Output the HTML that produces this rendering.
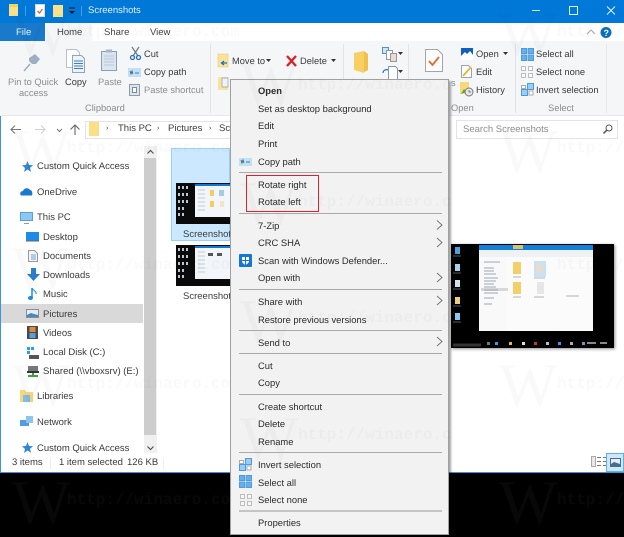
<!DOCTYPE html>
<html><head><meta charset="utf-8"><style>
html,body{margin:0;padding:0;background:#000}
#r{position:relative;width:624px;height:537px;overflow:hidden;background:#000;font-family:"Liberation Sans",sans-serif;font-size:10px;color:#333;filter:blur(.35px);text-rendering:geometricPrecision}
#r div,#r span.t{position:absolute;white-space:nowrap}
.t{line-height:12px;margin-top:1px}
.g{color:#8c8c8c}
.n{color:#3a3a3a}
.m{color:#2b2b2b;left:258px;font-size:9.400px}
.sep{left:239px;width:203px;height:1px;background:#a9a9a9}
svg{position:absolute;overflow:visible}
#r .wm{color:#000;opacity:.018;font-family:"Liberation Mono",monospace;font-weight:bold;font-size:16px;line-height:24px}
#r .W{color:#000;opacity:.02;font-family:"Liberation Serif",serif;font-size:62px;line-height:62px}
#r .k{color:#fff;opacity:.03}
.ri{font-size:9.300px}
.na{font-size:9.500px}
</style></head><body><div id="r">
<!-- window -->
<div style="left:0;top:0;width:624px;height:473px;background:#fff"></div>
<div style="left:0;top:0;width:624px;height:23px;background:#0078d7"></div>
<div style="left:0;top:23px;width:1px;height:449px;background:#3a95dc"></div>
<div style="left:0;top:472px;width:624px;height:1px;background:#3a95dc"></div>
<div style="left:0;top:41px;width:624px;height:74px;background:#f5f6f7"></div>
<div style="left:0;top:115px;width:624px;height:1px;background:#e8e8e8"></div>
<div style="left:0;top:23px;width:45px;height:18px;background:#1979ca"></div>
<div style="left:46px;top:23px;width:46px;height:18px;background:#f5f6f7"></div>
<!-- titlebar -->
<svg style="left:9px;top:3px" width="10" height="14"><path d="M0 1h9v12H0z" fill="#fbe08a"/><path d="M0 1h9v3H0z" fill="#f5cf5f"/></svg>
<div style="left:25px;top:6px;width:1px;height:10px;background:#4a9fe0"></div>
<svg style="left:35px;top:4px" width="11" height="14"><path d="M.5.500h9v12h-9z" fill="#fff" stroke="#d9d9d9"/><path d="M2.500 7l2 2 3-4" fill="none" stroke="#e2603a" stroke-width="1.300"/></svg>
<svg style="left:53px;top:4px" width="10" height="14"><path d="M0 1h10v12H0z" fill="#fbe08a"/></svg>
<svg style="left:69px;top:8px" width="7" height="7"><path d="M0 0h6" stroke="#111"/><path d="M0 3h6L3 6z" fill="#111"/></svg>
<div style="left:81px;top:6px;width:1px;height:10px;background:#4a9fe0"></div>
<span class="t" style="left:88px;top:4px;color:#e4f1fb;font-size:9.500px">Screenshots</span>
<svg style="left:532px;top:5px" width="80" height="12"><path d="M0 5.500h8" stroke="#cfe6f8"/><path d="M37.500 1.500h8v8h-8z" fill="none" stroke="#e6f2fb"/><path d="M75 1.500l8 8M83 1.500l-8 8" stroke="#e6f2fb"/></svg>
<!-- tabs -->
<span class="t" style="left:16px;top:26px;color:#e8f3fb;font-size:9.500px">File</span>
<span class="t" style="left:57px;top:26px;color:#444;font-size:9.500px">Home</span>
<span class="t" style="left:104px;top:26px;color:#444;font-size:9.500px">Share</span>
<span class="t" style="left:150px;top:26px;color:#444;font-size:9.500px">View</span>
<svg style="left:599px;top:27px" width="25" height="14"><path d="M-12 7l4-4 4 4" fill="none" stroke="#aaa"/><circle cx="7" cy="5.500" r="5.500" fill="#0a6fc2"/><text x="4.500" y="9" font-size="9" font-weight="bold" fill="#fff" font-family="Liberation Sans">?</text></svg>
<!-- ribbon: clipboard -->
<svg style="left:23px;top:53px" width="18" height="20"><path d="M6 5l6-4 5 5-4 5-4 0-3-3z" fill="#9db0c2"/><path d="M7 11l-6 7" stroke="#9db0c2" stroke-width="1.500"/></svg>
<span class="t g ri" style="left:8px;top:75px">Pin to Quick</span>
<span class="t g ri" style="left:19px;top:86px">access</span>
<svg style="left:66px;top:49px" width="20" height="25"><path d="M.5.500h10l3 3v15H.5z" fill="#fff" stroke="#b7c1cc"/><path d="M6.500 6.500h9l3 3v14h-12z" fill="#eaf2fb" stroke="#8fa5bb"/><path d="M8 12h9M8 14.500h9M8 17h9M8 19.500h9" stroke="#3f7cc6"/></svg>
<span class="t n ri" style="left:65px;top:75px">Copy</span>
<svg style="left:101px;top:49px" width="17" height="24"><path d="M.5 2.500h15v19H.5z" fill="#dbe5f0" stroke="#8b9db0"/><path d="M5 .5h6v3H5z" fill="#aab6c3"/><path d="M3 7h10M3 10h10M3 13h10M3 16h10" stroke="#b7c6d6"/></svg>
<span class="t g ri" style="left:98px;top:75px">Paste</span>
<svg style="left:130px;top:47px" width="11" height="14"><path d="M2 0l6 9M9 0L3 9" stroke="#6a7785" stroke-width="1.200"/><circle cx="2.500" cy="10.500" r="2" fill="none" stroke="#1f6fc0" stroke-width="1.300"/><circle cx="8.500" cy="10.500" r="2" fill="none" stroke="#1f6fc0" stroke-width="1.300"/></svg>
<span class="t n ri" style="left:144px;top:47px">Cut</span>
<svg style="left:128px;top:68px" width="13" height="9"><path d="M0 0h13v9H0z" fill="#bfe0f7"/><path d="M2 3l1 3 1-3 1 3M7 5h4" stroke="#44535f" fill="none" stroke-width=".8"/></svg>
<span class="t n ri" style="left:144px;top:65px">Copy path</span>
<svg style="left:129px;top:83px" width="11" height="13"><path d="M.5 1.500h10v11H.5z" fill="#dce5ee" stroke="#8e9caa"/><path d="M3.500 4.500h4v5h-4z" fill="#fff" stroke="#7e8c9a"/></svg>
<span class="t g ri" style="left:144px;top:83px">Paste shortcut</span>
<span class="t g ri" style="left:85px;top:101px">Clipboard</span>
<div style="left:210px;top:44px;width:1px;height:69px;background:#e2e3e4"></div>
<!-- organize -->
<svg style="left:218px;top:54px" width="11" height="14"><path d="M0 0h10v13H0z" fill="#fbe29a" stroke="#e9c66a" stroke-width=".6"/><path d="M9 9H4M6 7L3.500 9 6 11" fill="none" stroke="#1d72c8" stroke-width="1.300"/></svg>
<span class="t n ri" style="left:232px;top:54px">Move to</span>
<svg style="left:266px;top:59px" width="6" height="4"><path d="M0 0h5L2.500 3z" fill="#333"/></svg>
<svg style="left:286px;top:55px" width="11" height="12"><path d="M1 1l9 10M10 1L1 11" stroke="#d8202a" stroke-width="2.300"/></svg>
<span class="t n ri" style="left:300px;top:54px">Delete</span>
<svg style="left:331px;top:59px" width="6" height="4"><path d="M0 0h5L2.500 3z" fill="#333"/></svg>
<svg style="left:218px;top:77px" width="12" height="14"><path d="M0 0h10v13H0z" fill="#fbe29a"/><path d="M4 1h6v9H4z" fill="#eef3f8" stroke="#8fa0b1" stroke-width=".7"/></svg>
<div style="left:343px;top:44px;width:1px;height:69px;background:#e2e3e4"></div>
<!-- new -->
<svg style="left:354px;top:51px" width="15" height="22"><path d="M0 2l10-2v3h4v16l-4 2v1L0 19z" fill="#f7cf62"/><path d="M10 0v21l4-2V3" fill="#efc04a"/></svg>
<svg style="left:382px;top:47px" width="18" height="16"><path d="M.5.500h6v6h-6z" fill="#cfe4f7" stroke="#4f92d2"/><path d="M4.500 3.500h6v9h-6z" fill="#fff" stroke="#8b99a8"/><path d="M8.500 6.500h6v8h-6z" fill="#f3d9cc" stroke="#8b99a8"/></svg>
<svg style="left:398px;top:52px" width="6" height="4"><path d="M0 0h5L2.500 3z" fill="#333"/></svg>
<svg style="left:382px;top:65px" width="18" height="15"><path d="M1 8c0-3 3-4 6-3" fill="none" stroke="#1d72c8" stroke-width="1.200"/><path d="M6.500 1.500h7l2 2v11h-9z" fill="#fff" stroke="#8b99a8"/></svg>
<svg style="left:398px;top:70px" width="6" height="4"><path d="M0 0h5L2.500 3z" fill="#333"/></svg>
<div style="left:408px;top:44px;width:1px;height:69px;background:#e2e3e4"></div>
<!-- open -->
<svg style="left:425px;top:49px" width="18" height="24"><path d="M.5.500h12l5 5v17H.5z" fill="#fdfdfd" stroke="#a5a5a5"/><path d="M4 12l3.500 4L14 8" fill="none" stroke="#e66a2c" stroke-width="1.800"/></svg>
<span class="t g ri" style="left:451px;top:76px">s</span>
<svg style="left:461px;top:48px" width="12" height="12"><path d="M0 0h12v12H0z" fill="#fff"/><path d="M0 0h12v7L9 3 6 6 4 4 0 8z" fill="#0f5fbf"/></svg>
<span class="t n ri" style="left:476px;top:47px">Open</span>
<svg style="left:503px;top:52px" width="6" height="4"><path d="M0 0h5L2.500 3z" fill="#333"/></svg>
<svg style="left:461px;top:65px" width="12" height="14"><path d="M.5.500h7l3 3v9H.5z" fill="#fff" stroke="#98a3ad"/><path d="M2 11L10 2" stroke="#ecb52f" stroke-width="1.800"/></svg>
<span class="t n ri" style="left:476px;top:65px">Edit</span>
<svg style="left:460px;top:82px" width="14" height="15"><path d="M0 0h9v12H0z" fill="#f8d975"/><path d="M1 12l3-5 2 3z" fill="#3bb04a"/><circle cx="9" cy="10" r="4" fill="#e7e7e7" stroke="#777"/><path d="M9 8v2h2" fill="none" stroke="#555" stroke-width=".7"/></svg>
<span class="t n ri" style="left:476px;top:83px">History</span>
<span class="t g ri" style="left:451px;top:101px">Open</span>
<div style="left:515px;top:44px;width:1px;height:69px;background:#e2e3e4"></div>
<!-- select -->
<svg style="left:521px;top:48px" width="13" height="13"><path d="M0 0h13v13H0z" fill="#fff"/><path d="M.5.500h5v5h-5zM7 .5h5.500v5H7zM.5 7h5v5.500h-5zM7 7h5.500v5.500H7z" fill="#69aee9" stroke="#4b9be0"/></svg>
<span class="t n ri" style="left:536px;top:47px">Select all</span>
<svg style="left:521px;top:66px" width="13" height="13"><path d="M.5.500h4v4h-4zM7.500.5h4v4h-4zM.5 7.500h4v4h-4zM7.500 7.500h4v4h-4z" fill="#fff" stroke="#bdbdbd"/></svg>
<span class="t n ri" style="left:536px;top:65px">Select none</span>
<svg style="left:521px;top:83px" width="13" height="13"><path d="M6.500.5h6v6h-6zM.5 6.500h6v6h-6z" fill="#9ccbf3" stroke="#4b9be0"/><path d="M.5 2.500h4v3h-4zM8 8h4v4H8z" fill="#fff" stroke="#aaa"/></svg>
<span class="t n ri" style="left:536px;top:83px">Invert selection</span>
<span class="t g ri" style="left:548px;top:101px">Select</span>
<div style="left:606px;top:44px;width:1px;height:69px;background:#e8e9ea"></div>
<!-- address -->
<svg style="left:11px;top:124px" width="70" height="12"><path d="M0 5.500h10M4 1.500L0 5.500l4 4" fill="none" stroke="#777" stroke-width="1.100"/><path d="M24 5.500h10M30 1.500l4 4-4 4" fill="none" stroke="#d0d0d0" stroke-width="1.100"/><path d="M46 5l2.500 2.500L51 5" fill="none" stroke="#777"/><path d="M64 1v10M59.500 5.500L64 1l4.500 4.500" fill="none" stroke="#666" stroke-width="1.100"/></svg>
<div style="left:85px;top:121px;width:145px;height:16px;border:1px solid #e3e3e3;background:#fff"></div>
<svg style="left:89px;top:121px" width="12" height="16"><path d="M0 1h10v14H0z" fill="#fbdf86"/></svg>
<span class="t n" style="left:106px;top:122px;font-size:7px">›</span>
<span class="t n na" style="left:118px;top:122px">This PC</span>
<span class="t n" style="left:157px;top:122px;font-size:7px">›</span>
<span class="t n na" style="left:168px;top:122px">Pictures</span>
<span class="t n" style="left:209px;top:122px;font-size:7px">›</span>
<span class="t n na" style="left:219px;top:122px">Sc</span>
<div style="left:456px;top:120px;width:160px;height:17px;border:1px solid #e3e3e3;background:#fff"></div>
<span class="t g na" style="left:463px;top:123px">Search Screenshots</span>
<svg style="left:603px;top:124px" width="10" height="10"><circle cx="6" cy="4" r="3" fill="none" stroke="#555"/><path d="M3.800 6.200L.5 9.500" stroke="#555" stroke-width="1.500"/></svg>
<!-- nav -->
<div style="left:144px;top:146px;width:13px;height:307px;background:#f0f0f0"></div>
<div style="left:144px;top:158px;width:12px;height:277px;background:#cdcdcd"></div>
<svg style="left:147px;top:149px" width="8" height="6"><path d="M.5 4.500L3.500 1.500l3 3" fill="none" stroke="#555" stroke-width="1.200"/></svg>
<svg style="left:147px;top:445px" width="8" height="6"><path d="M.5 1.500L3.500 4.500l3-3" fill="none" stroke="#555" stroke-width="1.200"/></svg>
<div style="left:1px;top:304px;width:142px;height:19px;background:#d9d9d9"></div>
<svg style="left:22px;top:161px" width="11" height="11"><path d="M5.500 0l1.500 4 4 .3-3 2.500 1 4L5.500 8.500 2 11l1-4L0 4.300 4 4z" fill="#2f86d6"/></svg>
<span class="t n na" style="left:37px;top:160px">Custom Quick Access</span>
<svg style="left:20px;top:187px" width="13" height="9"><path d="M1 8.500C-1 6 1 4 3 4c1-3 5-4 7-1 2 0 3 3 2 5.500z" fill="#1a78d2"/></svg>
<span class="t n na" style="left:37px;top:186px">OneDrive</span>
<svg style="left:20px;top:212px" width="13" height="13"><path d="M0 0h13v9H0z" fill="#8bc8f3"/><path d="M.5.500h12v8H.5z" fill="none" stroke="#5a9fd6"/><path d="M4 11h5v1H4z" fill="#999"/></svg>
<span class="t n na" style="left:37px;top:211px">This PC</span>
<svg style="left:26px;top:232px" width="13" height="10"><path d="M0 0h13v9H0z" fill="#1b8ae8"/><path d="M0 9h13" stroke="#666"/></svg>
<span class="t n na" style="left:43px;top:231px">Desktop</span>
<svg style="left:28px;top:250px" width="10" height="12"><path d="M.5.500h6l3 3v8H.5z" fill="#f4f4f4" stroke="#999"/><path d="M3 5h5M3 7h5M3 9h5" stroke="#6aa4d8"/></svg>
<span class="t n na" style="left:43px;top:250px">Documents</span>
<svg style="left:27px;top:268px" width="13" height="14"><path d="M4 0h5v6h4L6.500 13 0 6h4z" fill="#2c7fd0"/></svg>
<span class="t n na" style="left:43px;top:269px">Downloads</span>
<svg style="left:28px;top:287px" width="10" height="14"><path d="M4 1v10" stroke="#1a8ae4" stroke-width="1.500"/><ellipse cx="2.500" cy="11" rx="2.500" ry="2" fill="#1a8ae4"/><path d="M4 1c1 3 5 3 4 6" fill="none" stroke="#1a8ae4"/></svg>
<span class="t n na" style="left:43px;top:288px">Music</span>
<svg style="left:26px;top:309px" width="13" height="9"><path d="M.5.500h12v8H.5z" fill="#dfeefa" stroke="#8d8d8d"/><path d="M1 6l4-2 3 1 4 1v2H1z" fill="#4b87bd"/></svg>
<span class="t n na" style="left:43px;top:308px">Pictures</span>
<svg style="left:27px;top:326px" width="11" height="13"><path d="M0 0h11v13H0z" fill="#4b4b4b"/><path d="M2.500 1h6v5h-6z" fill="#e08a3a"/><path d="M2.500 7h6v5h-6z" fill="#5a9fd6"/></svg>
<span class="t n na" style="left:43px;top:327px">Videos</span>
<svg style="left:26px;top:346px" width="13" height="13"><path d="M1 1h3v3H1zM5 1h3v3H5zM1 5h3v3H1z" fill="#28a0ee"/><path d="M3 9h10v4H3z" fill="#555"/></svg>
<span class="t n na" style="left:43px;top:346px">Local Disk (C:)</span>
<svg style="left:27px;top:366px" width="12" height="12"><path d="M1 0h10v5H1z" fill="#777"/><path d="M0 5h12v2H0z" fill="#333"/><path d="M5 7h2v2h4v2H1V9h4z" fill="#37a537"/></svg>
<span class="t n na" style="left:43px;top:365px">Shared (\\vboxsrv) (E:)</span>
<svg style="left:20px;top:390px" width="13" height="12"><path d="M0 0h5l1 2h7v10H0z" fill="#f8d775"/><path d="M3 5h7v7H3z" fill="#7fbdec"/></svg>
<span class="t n na" style="left:37px;top:390px">Libraries</span>
<svg style="left:20px;top:415px" width="13" height="13"><path d="M0 5h9v6H0z" fill="#4f9de0"/><path d="M6 1h7v7H6z" fill="#8cc3ef"/></svg>
<span class="t n na" style="left:37px;top:416px">Network</span>
<svg style="left:22px;top:442px" width="11" height="11"><path d="M5.500 0l1.500 4 4 .3-3 2.500 1 4L5.500 8.500 2 11l1-4L0 4.300 4 4z" fill="#2f86d6"/></svg>
<span class="t n na" style="left:37px;top:442px">Custom Quick Access</span>
<!-- status -->
<span class="t n na" style="left:12px;top:456px">3 items</span>
<div style="left:50px;top:458px;width:1px;height:11px;background:#eee"></div>
<span class="t n na" style="left:59px;top:456px">1 item selected</span>
<span class="t n na" style="left:127px;top:456px">126 KB</span>
<div style="left:163px;top:458px;width:1px;height:11px;background:#eee"></div>
<svg style="left:591px;top:453px" width="33" height="19"><path d="M.5 3.500h4v10h-4z" fill="#e8e8e8" stroke="#aaa"/><path d="M6 4.500h4M12 4.500h4M6 8.500h4M12 8.500h4M6 12.500h4M12 12.500h4" stroke="#777"/></svg>
<div style="left:606px;top:453px;width:16px;height:17px;background:#cce8ff;border:1px solid #5cb2ec"></div>
<svg style="left:610px;top:458px" width="11" height="9"><path d="M.5.500h10v8H.5z" fill="#dfeefa" stroke="#666"/><path d="M1 6l3-2 3 1 3 1v2H1z" fill="#3a6f9f"/></svg>
<!-- files -->
<div style="left:171px;top:148px;width:59px;height:93px;background:#cce8ff;border:1px solid #99d1ff;box-sizing:border-box"></div>
<div style="left:176px;top:183px;width:54px;height:41px;background:#0a0a0a"></div>
<div style="left:195px;top:184px;width:35px;height:33px;background:#f2f6fa"></div>
<div style="left:195px;top:184px;width:35px;height:2px;background:#0f7ad6"></div>
<svg style="left:178px;top:185px" width="52" height="34"><path d="M0 1h2v3H0zM4 1h2v3H4zM8 1h2v3H8zM0 8h2v3H0zM4 8h2v3H4zM8 8h2v3H8zM0 15h2v3H0zM4 15h2v3H4zM8 15h2v3H8zM0 22h2v3H0zM4 22h2v3H4zM0 28h2v3H0zM4 28h2v3H4z" fill="#b9c6d2"/><path d="M32 5h4v6h-4zM32 16h4v6h-4z" fill="#f5cd5e"/><path d="M41 5h5v6h-5z" fill="#a8c9e4"/><path d="M42 16h4v6h-4z" fill="#efe7c7"/><path d="M20 5h7M20 9h7M20 13h7M20 17h7M20 21h7M20 25h7" stroke="#c2cad2"/></svg>
<span class="t n na" style="left:183px;top:228px">Screenshot</span>
<div style="left:176px;top:245px;width:54px;height:41px;background:#0a0a0a"></div>
<div style="left:195px;top:246px;width:35px;height:33px;background:#f2f6fa"></div>
<div style="left:195px;top:246px;width:35px;height:2px;background:#0f7ad6"></div>
<svg style="left:178px;top:247px" width="52" height="34"><path d="M0 1h2v3H0zM4 1h2v3H4zM8 1h2v3H8zM0 8h2v3H0zM4 8h2v3H4zM8 8h2v3H8zM0 15h2v3H0zM4 15h2v3H4zM8 15h2v3H8zM0 22h2v3H0zM4 22h2v3H4zM0 28h2v3H0zM4 28h2v3H4z" fill="#b9c6d2"/><path d="M30 6h5v3h-5zM39 6h5v3h-5z" fill="#555"/><path d="M20 5h7M20 9h7M20 13h7M20 17h7M20 21h7M20 25h7" stroke="#c2cad2"/></svg>
<span class="t n na" style="left:183px;top:290px">Screenshot</span>
<!-- preview -->
<div style="left:451px;top:244px;width:163px;height:104px;background:#000;box-shadow:1px 1px 3px rgba(0,0,0,.45)"></div>
<div style="left:479px;top:245px;width:114px;height:86px;background:#fbfbfb"></div>
<div style="left:479px;top:245px;width:114px;height:5px;background:#1380d8"></div>
<div style="left:513px;top:245px;width:10px;height:4px;background:#d9c267"></div>
<div style="left:479px;top:250px;width:114px;height:7px;background:#f0f1f3"></div>
<div style="left:479px;top:257px;width:28px;height:74px;background:#f9f9f9"></div>
<div style="left:481px;top:288px;width:27px;height:3px;background:#d8d8d8"></div>
<svg style="left:481px;top:261px" width="110" height="62"><path d="M3 1h16M3 7h10M3 10h10M3 13h12M3 17h14M3 20h12M3 23h10M3 26h12M3 29h14M3 32h14M3 37h10M3 43h8" stroke="#9aa6b2"/><path d="M32 1h8v12h-8zM32 21h8v12h-8z" fill="#f3cf6a"/><path d="M53 0h12v16H53z" fill="#c7e2f6"/><path d="M55 3h7v9h-7z" fill="#e8dcd0"/><path d="M56 21h7v12h-7z" fill="#e6e6e6"/><path d="M32 16h8M53 17h11M32 36h8M53 36h10M85 35h13" stroke="#b3b3b3"/></svg>
<svg style="left:453px;top:246px" width="160" height="100"><path d="M2 1h5v7H2z" fill="#4d9fe0"/><path d="M2 18h5v7H2z" fill="#a7d0ee"/><path d="M2 34h5v7H2z" fill="#cfe2f0"/><path d="M2 51h5v7H2z" fill="#eecf73"/><path d="M2 67h5v7H2z" fill="#8cc6f0"/><path d="M0 10h8M0 27h8M0 43h8M0 60h8M0 76h8" stroke="#556"/><path d="M0 99h28" stroke="#333" stroke-width="3"/></svg>
<svg style="left:487px;top:342px" width="125" height="4"><path d="M0 0h3v3H0z" fill="#777"/><path d="M8 0h3v3H8z" fill="#3a9be0"/><path d="M22 0h3v3h-3z" fill="#d9b95a"/><path d="M35 0h3v3h-3z" fill="#ddd"/><path d="M47 0h3v3h-3z" fill="#c33"/><path d="M59 0h3v3h-3z" fill="#9cc"/><path d="M71 0h3v3h-3z" fill="#39e"/><path d="M83 0h3v3h-3z" fill="#aab"/><path d="M95 0h3v3h-3z" fill="#88c"/></svg>
<svg style="left:586px;top:342px" width="28" height="4"><path d="M1 1h9M14 1h7" stroke="#888" stroke-width="2"/></svg>
<!-- watermark on window -->
<div class="W" style="left:12px;top:4px">W</div>
<div class="W" style="left:12px;top:121px">W</div>
<div class="W" style="left:12px;top:238px">W</div>
<div class="W" style="left:12px;top:355px">W</div>
<div class="W" style="left:499px;top:4px">W</div>
<div class="W" style="left:499px;top:121px">W</div>
<div class="W" style="left:499px;top:355px">W</div>
<div class="wm" style="left:67px;top:20px">http://winaero.com</div>
<div class="wm" style="left:67px;top:136px">http://winaero.com</div>
<div class="wm" style="left:67px;top:253px">http://winaero.com</div>
<div class="wm" style="left:67px;top:372px">http://winaero.com</div>
<div class="wm" style="left:557px;top:20px">http://winaero.com</div>
<div class="wm" style="left:557px;top:136px">http://winaero.com</div>
<div class="wm" style="left:557px;top:253px">http://winaero.com</div>
<div class="wm" style="left:557px;top:372px">http://winaero.com</div>
<div class="W k" style="left:12px;top:472px">W</div>
<div class="wm k" style="left:67px;top:488px">http://winaero.com</div>
<div class="W k" style="left:499px;top:472px">W</div>
<div class="wm k" style="left:557px;top:488px">http://</div>
<!-- context menu -->
<div style="left:230px;top:79px;width:219px;height:456px;background:#f2f2f2;border:1px solid #a0a0a0;box-sizing:border-box;box-shadow:2px 2px 2px rgba(0,0,0,.35)"></div>
<div class="W" style="left:240px;top:54px">W</div>
<div class="W" style="left:240px;top:173px">W</div>
<div class="W" style="left:240px;top:291px">W</div>
<div class="W" style="left:240px;top:408px">W</div>
<div class="wm" style="left:298px;top:73px">http://winaero.c</div>
<div class="wm" style="left:298px;top:190px">http://winaero.c</div>
<div class="wm" style="left:298px;top:306px">http://winaero.c</div>
<div class="wm" style="left:298px;top:423px">http://winaero.c</div>
<span class="t m" style="top:84px;font-weight:bold">Open</span>
<span class="t m" style="top:102px">Set as desktop background</span>
<span class="t m" style="top:119px">Edit</span>
<span class="t m" style="top:137px">Print</span>
<span class="t m" style="top:155px">Copy path</span>
<svg style="left:239px;top:158px" width="13" height="8"><path d="M0 0h13v8H0z" fill="#bfe0f7"/><path d="M2 2l1 3 1-3 1 3M7 4h4" stroke="#44535f" fill="none" stroke-width=".8"/></svg>
<div class="sep" style="top:172px"></div>
<span class="t m" style="top:178px">Rotate right</span>
<span class="t m" style="top:195px">Rotate left</span>
<div style="left:246px;top:175px;width:73px;height:37px;border:1.500px solid #e0202a;box-sizing:border-box"></div>
<div class="sep" style="top:213px"></div>
<span class="t m" style="top:219px">7-Zip</span>
<span class="t m" style="top:236px">CRC SHA</span>
<span class="t m" style="top:254px">Scan with Windows Defender...</span>
<svg style="left:239px;top:254px" width="13" height="13"><path d="M1 0h11a1 1 0 0 1 1 1v11a1 1 0 0 1-1 1H1a1 1 0 0 1-1-1V1a1 1 0 0 1 1-1z" fill="#1477d4"/><path d="M3 3h7v4c0 2-2 3-3.500 4C5 10 3 9 3 7z" fill="#fff"/><path d="M6.500 3v8M3 6.500h7" stroke="#1477d4"/></svg>
<span class="t m" style="top:271px">Open with</span>
<div class="sep" style="top:289px"></div>
<span class="t m" style="top:295px">Share with</span>
<span class="t m" style="top:313px">Restore previous versions</span>
<div class="sep" style="top:330px"></div>
<span class="t m" style="top:336px">Send to</span>
<div class="sep" style="top:353px"></div>
<span class="t m" style="top:359px">Cut</span>
<span class="t m" style="top:376px">Copy</span>
<div class="sep" style="top:394px"></div>
<span class="t m" style="top:400px">Create shortcut</span>
<span class="t m" style="top:417px">Delete</span>
<span class="t m" style="top:435px">Rename</span>
<div class="sep" style="top:452px"></div>
<span class="t m" style="top:458px">Invert selection</span>
<span class="t m" style="top:476px">Select all</span>
<span class="t m" style="top:493px">Select none</span>
<div class="sep" style="top:510px;height:2px;background:#c4c4c4"></div>
<span class="t m" style="top:516px">Properties</span>
<svg style="left:436px;top:220px" width="8" height="130" fill="none" stroke="#777"><path d="M1 .5l5 4.500-5 4.500M1 18l5 4.500-5 4.500M1 53l5 4.500-5 4.500M1 76l5 4.500-5 4.500M1 117l5 4.500-5 4.500"/></svg>
<svg style="left:239px;top:458px" width="13" height="13"><path d="M6.500.5h6v6h-6zM.5 6.500h6v6h-6z" fill="#9ccbf3" stroke="#4b9be0"/><path d="M.5 2.500h4v3h-4zM8 8h4v4H8z" fill="#fff" stroke="#aaa"/></svg>
<svg style="left:239px;top:475px" width="13" height="13"><path d="M0 0h13v13H0z" fill="#fff"/><path d="M.5.500h5v5h-5zM7 .5h5.500v5H7zM.5 7h5v5.500h-5zM7 7h5.500v5.500H7z" fill="#69aee9" stroke="#4b9be0"/></svg>
<svg style="left:240px;top:494px" width="12" height="12"><path d="M.5.500h4v4h-4zM7.500.5h4v4h-4zM.5 7.500h4v4h-4zM7.500 7.500h4v4h-4z" fill="#f8f8f8" stroke="#bdbdbd"/></svg>
</div></body></html>
